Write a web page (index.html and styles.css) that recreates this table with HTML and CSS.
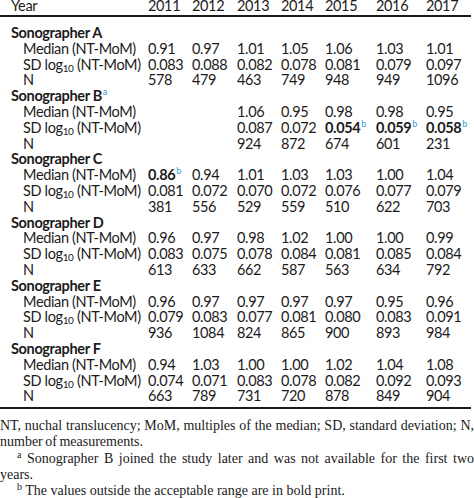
FILE: index.html
```html
<!DOCTYPE html>
<html>
<head>
<meta charset="utf-8">
<link rel="stylesheet" href="styles.css">
</head>
<body>
<div class="page">
<table class="data">
  <colgroup>
    <col class="c-label"><col class="c1"><col class="c2"><col class="c3"><col class="c4"><col class="c5"><col class="c6"><col class="c7">
  </colgroup>
  <thead>
    <tr><th class="lab">Year</th><th>2011</th><th>2012</th><th>2013</th><th>2014</th><th>2015</th><th>2016</th><th>2017</th></tr>
  </thead>
  <tbody>
    <tr class="grp first"><td class="lab">Sonographer A</td><td></td><td></td><td></td><td></td><td></td><td></td><td></td></tr>
    <tr><td class="sub">Median (NT-MoM)</td><td>0.91</td><td>0.97</td><td>1.01</td><td>1.05</td><td>1.06</td><td>1.03</td><td>1.01</td></tr>
    <tr><td class="sub">SD log<sub>10</sub> (NT-MoM)</td><td>0.083</td><td>0.088</td><td>0.082</td><td>0.078</td><td>0.081</td><td>0.079</td><td>0.097</td></tr>
    <tr><td class="sub">N</td><td>578</td><td>479</td><td>463</td><td>749</td><td>948</td><td>949</td><td>1096</td></tr>

    <tr class="grp"><td class="lab">Sonographer B<sup class="fn">a</sup></td><td></td><td></td><td></td><td></td><td></td><td></td><td></td></tr>
    <tr><td class="sub">Median (NT-MoM)</td><td></td><td></td><td>1.06</td><td>0.95</td><td>0.98</td><td>0.98</td><td>0.95</td></tr>
    <tr><td class="sub">SD log<sub>10</sub> (NT-MoM)</td><td></td><td></td><td>0.087</td><td>0.072</td><td><b>0.054</b><sup class="fn">b</sup></td><td><b>0.059</b><sup class="fn">b</sup></td><td><b>0.058</b><sup class="fn">b</sup></td></tr>
    <tr><td class="sub">N</td><td></td><td></td><td>924</td><td>872</td><td>674</td><td>601</td><td>231</td></tr>

    <tr class="grp"><td class="lab">Sonographer C</td><td></td><td></td><td></td><td></td><td></td><td></td><td></td></tr>
    <tr><td class="sub">Median (NT-MoM)</td><td><b>0.86</b><sup class="fn">b</sup></td><td>0.94</td><td>1.01</td><td>1.03</td><td>1.03</td><td>1.00</td><td>1.04</td></tr>
    <tr><td class="sub">SD log<sub>10</sub> (NT-MoM)</td><td>0.081</td><td>0.072</td><td>0.070</td><td>0.072</td><td>0.076</td><td>0.077</td><td>0.079</td></tr>
    <tr><td class="sub">N</td><td>381</td><td>556</td><td>529</td><td>559</td><td>510</td><td>622</td><td>703</td></tr>

    <tr class="grp"><td class="lab">Sonographer D</td><td></td><td></td><td></td><td></td><td></td><td></td><td></td></tr>
    <tr><td class="sub">Median (NT-MoM)</td><td>0.96</td><td>0.97</td><td>0.98</td><td>1.02</td><td>1.00</td><td>1.00</td><td>0.99</td></tr>
    <tr><td class="sub">SD log<sub>10</sub> (NT-MoM)</td><td>0.083</td><td>0.075</td><td>0.078</td><td>0.084</td><td>0.081</td><td>0.085</td><td>0.084</td></tr>
    <tr><td class="sub">N</td><td>613</td><td>633</td><td>662</td><td>587</td><td>563</td><td>634</td><td>792</td></tr>

    <tr class="grp"><td class="lab">Sonographer E</td><td></td><td></td><td></td><td></td><td></td><td></td><td></td></tr>
    <tr><td class="sub">Median (NT-MoM)</td><td>0.96</td><td>0.97</td><td>0.97</td><td>0.97</td><td>0.97</td><td>0.95</td><td>0.96</td></tr>
    <tr><td class="sub">SD log<sub>10</sub> (NT-MoM)</td><td>0.079</td><td>0.083</td><td>0.077</td><td>0.081</td><td>0.080</td><td>0.083</td><td>0.091</td></tr>
    <tr><td class="sub">N</td><td>936</td><td>1084</td><td>824</td><td>865</td><td>900</td><td>893</td><td>984</td></tr>

    <tr class="grp"><td class="lab">Sonographer F</td><td></td><td></td><td></td><td></td><td></td><td></td><td></td></tr>
    <tr><td class="sub">Median (NT-MoM)</td><td>0.94</td><td>1.03</td><td>1.00</td><td>1.00</td><td>1.02</td><td>1.04</td><td>1.08</td></tr>
    <tr><td class="sub">SD log<sub>10</sub> (NT-MoM)</td><td>0.074</td><td>0.071</td><td>0.083</td><td>0.078</td><td>0.082</td><td>0.092</td><td>0.093</td></tr>
    <tr class="last"><td class="sub">N</td><td>663</td><td>789</td><td>731</td><td>720</td><td>878</td><td>849</td><td>904</td></tr>
  </tbody>
</table>
<div class="notes">
  <p class="note tight">NT, nuchal translucency; MoM, multiples of the median; SD, standard deviation; N, number of measurements.</p>
  <p class="note ind"><sup class="mark">a</sup> Sonographer B joined the study later and was not available for the first two years.</p>
  <p class="note ind"><sup class="mark">b</sup> The values outside the acceptable range are in bold print.</p>
</div>
</div>
</body>
</html>
```

FILE: styles.css
```css
html, body {
  margin: 0;
  padding: 0;
  background: #ffffff;
}
.page {
  width: 474px;
  color: #1c1a1b;
}
.data {
  border-collapse: collapse;
  width: 471px;
  table-layout: fixed;
  font-family: Lato, "Open Sans", sans-serif;
  font-size: 14.5px;
  letter-spacing: -0.35px;
}
.c-label { width: 148px; }
.c1 { width: 44px; }
.c2 { width: 45px; }
.c3 { width: 44px; }
.c4 { width: 44px; }
.c5 { width: 51px; }
.c6 { width: 50px; }
.c7 { width: 45px; }

.data th, .data td {
  padding: 0;
  text-align: left;
  white-space: nowrap;
  font-weight: normal;
}
.data thead th {
  height: 15px;
  line-height: 12px;
  vertical-align: top;
  border-bottom: 2px solid #1c1a1b;
}
.data tbody td {
  height: 15.8px;
  line-height: 15.8px;
  vertical-align: middle;
}
.data tbody tr.first td {
  padding-top: 8px;
}
.data tbody tr.last td {
  padding-bottom: 3px;
  border-bottom: 2px solid #1c1a1b;
}
.lab {
  padding-left: 11px !important;
}
.grp .lab {
  font-weight: bold;
}
.sub {
  padding-left: 23px !important;
}
sub {
  font-size: 10px;
  line-height: 0;
  vertical-align: -2px;
}
.fn {
  color: #2f9fd0;
  font-size: 9px;
  line-height: 0;
  vertical-align: 6px;
  margin-left: 1px;
  font-weight: normal;
}
.notes {
  width: 474px;
  font-family: "Liberation Serif", serif;
  font-size: 14px;
  line-height: 16.2px;
  padding-top: 9px;
}
.note {
  margin: 0;
  text-align: justify;
}
.note.tight {
  word-spacing: -1px;
}
.note.ind {
  text-indent: 17px;
}
.mark {
  font-size: 10px;
  line-height: 0;
  vertical-align: 5px;
}
```
